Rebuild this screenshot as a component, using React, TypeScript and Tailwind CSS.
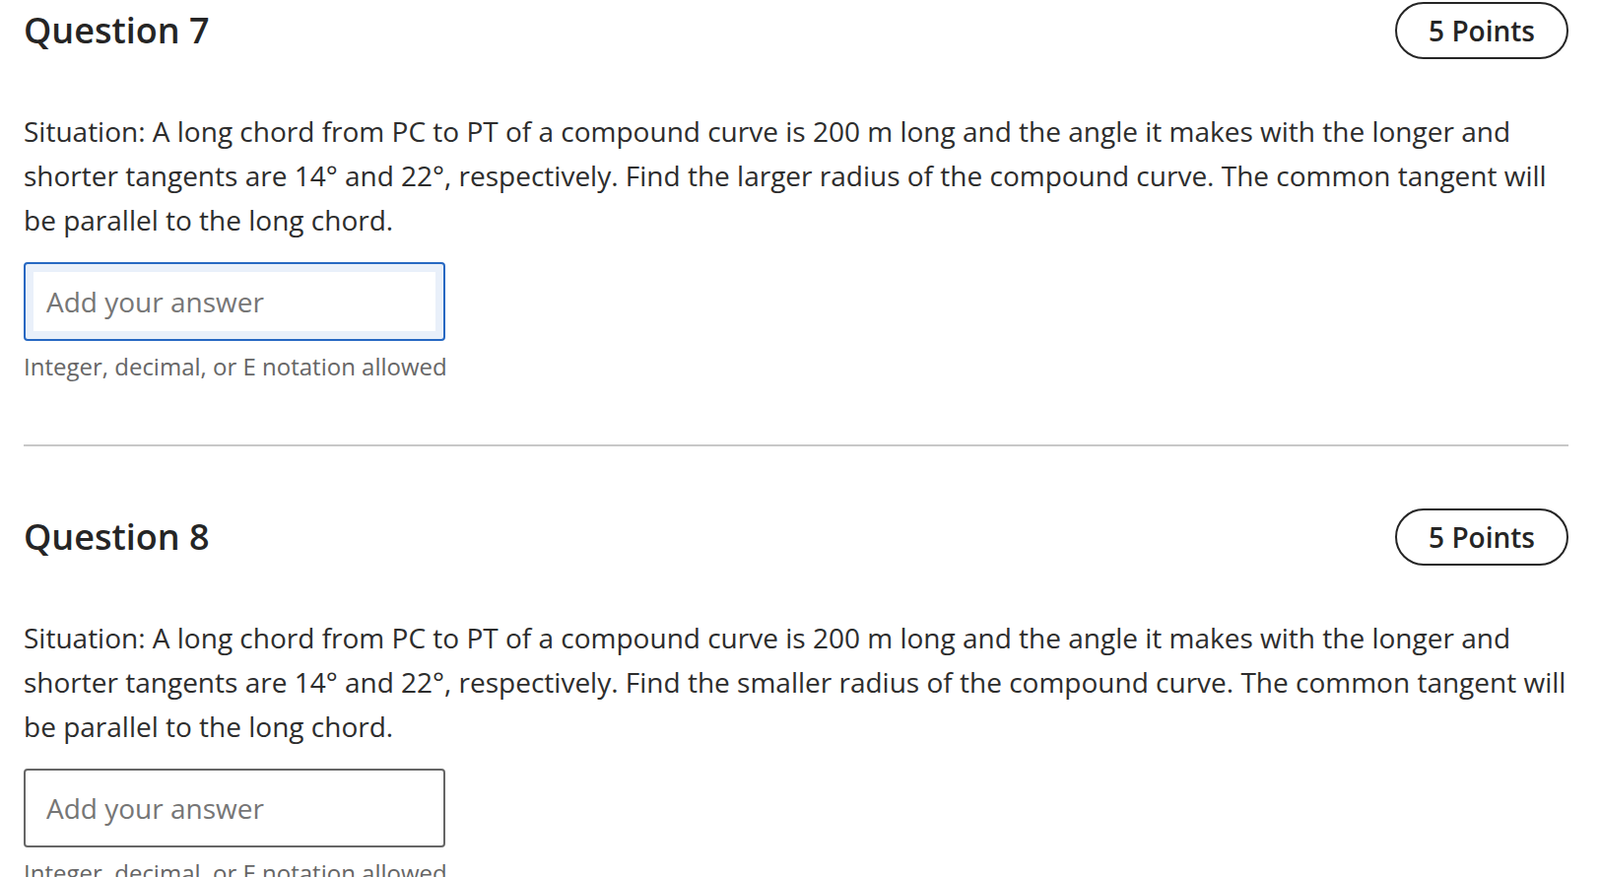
import { useState } from "react";

const questions = [
  {
    number: 7,
    points: 5,
    text: "Situation: A long chord from PC to PT of a compound curve is 200 m long and the angle it makes with the longer and shorter tangents are 14° and 22°, respectively. Find the larger radius of the compound curve. The common tangent will be parallel to the long chord.",
    focused: true,
  },
  {
    number: 8,
    points: 5,
    text: "Situation: A long chord from PC to PT of a compound curve is 200 m long and the angle it makes with the longer and shorter tangents are 14° and 22°, respectively. Find the smaller radius of the compound curve. The common tangent will be parallel to the long chord.",
    focused: false,
  },
];

function QuestionBlock({
  number,
  points,
  text,
  focused,
  last,
}: {
  number: number;
  points: number;
  text: string;
  focused: boolean;
  last: boolean;
}) {
  const [value, setValue] = useState("");

  return (
    <section>
      <div className="flex items-center justify-between h-[58px]">
        <h2 className="text-[36px] leading-[44px] font-semibold text-[#252525]">
          Question {number}
        </h2>
        <div className="h-[58px] px-[32px] flex items-center rounded-full border-2 border-[#252525] text-[28px] font-semibold text-[#252525]">
          {points} Points
        </div>
      </div>

      <p className="mt-[51px] text-[28px] leading-[45px] text-[#2d2d2d]">
        {text}
      </p>

      <div
        className={
          focused
            ? "mt-[20px] w-[428px] h-[80px] rounded-[4px] border-2 border-[#2668c2] bg-[#e9f0fa] p-[8px]"
            : "mt-[20px] w-[428px] h-[80px] rounded-[4px] border-2 border-[#666666] bg-white p-[8px]"
        }
      >
        <input
          value={value}
          onChange={(e) => setValue(e.target.value)}
          placeholder="Add your answer"
          className="w-full h-full bg-white outline-none px-[13px] text-[28px] text-[#333] placeholder:text-[#767676]"
        />
      </div>

      <p className="mt-[10px] text-[24px] leading-[32px] text-[#666666]">
        Integer, decimal, or E notation allowed
      </p>

      {!last && <hr className="mt-[63px] mb-[63px] border-0 h-[2px] bg-[#c8c8c8]" />}
    </section>
  );
}

export default function App() {
  return (
    <div
      className="min-h-screen bg-white pl-[24px] pr-[32px] pt-[2px]"
      style={{ fontFamily: '"Open Sans", "Noto Sans", sans-serif' }}
    >
      {questions.map((q, i) => (
        <QuestionBlock key={q.number} {...q} last={i === questions.length - 1} />
      ))}
    </div>
  );
}
